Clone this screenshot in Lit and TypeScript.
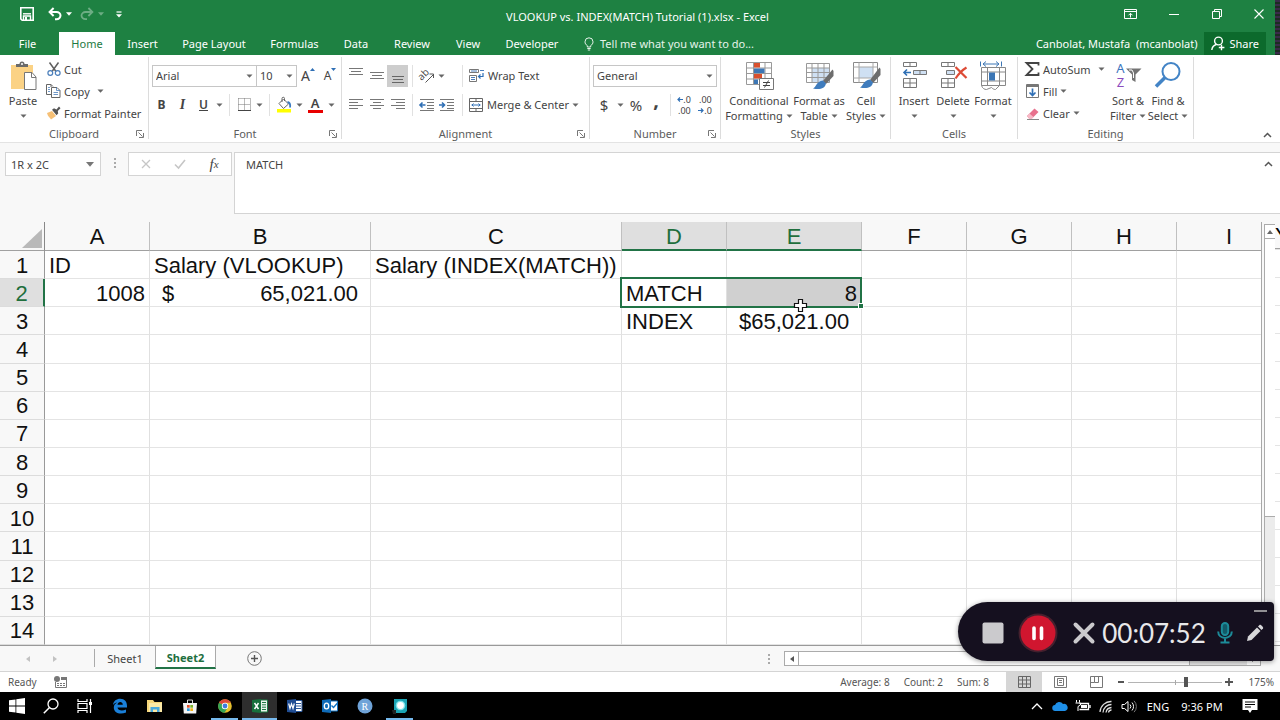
import { LitElement, html, svg, css, TemplateResult } from "lit";
import { customElement, property } from "lit/decorators.js";
import { classMap } from "lit/directives/class-map.js";

const caret = html`<svg class="caret" width="7" height="4" viewBox="0 0 7 4"><path d="M0.5 0.5h6L3.5 3.8z" fill="#666"/></svg>`;
const icon = (w: number, h: number, body: unknown) =>
  html`<svg width=${w} height=${h} viewBox="0 0 ${w} ${h}" fill="none" overflow="visible" aria-hidden="true">${body}</svg>`;

const I = {
  save: icon(14, 14, svg`<path d="M.8 .8h12.4v12.4H2.2L.8 11.8z" stroke="#fff" stroke-width="1.6"/><path d="M3 6.8h8" stroke="#fff" stroke-width="1.4"/><path d="M3.5 13V9h7v4" stroke="#fff" stroke-width="1.4"/><path d="M5 10h2v3H5z" fill="#fff"/>`),
  undo: icon(14, 14, svg`<path d="M2 5h6.5a4 3.6 0 0 1 0 7.2H7" stroke="#fff" stroke-width="2"/><path d="M5.6 1L1.6 5l4 4" stroke="#fff" stroke-width="2"/>`),
  redo: icon(14, 14, svg`<g opacity=".35"><path d="M12 5H5.500a4 3.600 0 0 0 0 7.200H7" stroke="#fff" stroke-width="1.800"/><path d="M8.400 1l4 4-4 4" stroke="#fff" stroke-width="1.800"/></g>`),
  caretW: icon(6, 4, svg`<path d="M0 .3h6L3 3.700z" fill="#fff"/>`),
  caretDim: icon(6, 4, svg`<path d="M0 .3h6L3 3.700z" fill="#fff" opacity=".35"/>`),
  custom: icon(6, 7, svg`<path d="M.5 1h5" stroke="#fff" stroke-width="1.200"/><path d="M0 3.200h6L3 6.500z" fill="#fff"/>`),
  ribbonOpt: icon(13, 10, svg`<path d="M.5 .5h12v9H.5zM.5 2.500h12" stroke="#fff"/><path d="M6.500 8.500V4.500M4.500 6.300l2-2 2 2" stroke="#fff"/>`),
  min: icon(10, 10, svg`<path d="M0 5.500h10" stroke="#fff"/>`),
  restore: icon(10, 10, svg`<path d="M.5 2.500h7v7h-7zM2.500 2.500v-2h7v7h-2" stroke="#fff"/>`),
  close: icon(10, 10, svg`<path d="M.5 .5l9 9M9.500 .5l-9 9" stroke="#fff" stroke-width="1.100"/>`),
  bulb: icon(10, 14, svg`<path d="M3.300 10V8.600C1.700 7.600 1 6.400 1 4.800a4 4 0 0 1 8 0c0 1.600-.7 2.800-2.300 3.800V10zM3.300 11.500h3.400M3.800 13h2.400" stroke="#e6f3ea"/>`),
  person: icon(14, 15, svg`<circle cx="7.500" cy="5" r="3.900" stroke="#fff" stroke-width="1.400"/><path d="M.8 14c.3-3 2-4.700 4.400-5.500M10.500 8.800v5.400M7.800 11.500h5.600" stroke="#fff" stroke-width="1.400"/>`),
  paste: icon(28, 30, svg`<path d="M2 4h22v24H2z" fill="#fbd285"/><path d="M7 6V3h3.500a2.500 2.500 0 0 1 5 0H19v3z" fill="#6b6b6b"/><circle cx="13" cy="3" r="1" fill="#fff"/><path d="M15.500 11.500h7.500l4 4.500v12.500H15.500z" fill="#fff" stroke="#777"/><path d="M22.500 11.500v5H27" stroke="#777"/>`),
  cut: icon(14, 14, svg`<path d="M2.500 .5l6.300 8.800M11.500 .5L5.200 9.300" stroke="#5f5f5f" stroke-width="1.500"/><circle cx="3.300" cy="11" r="2.400" stroke="#4a7ebb" stroke-width="1.200"/><circle cx="10.700" cy="11" r="2.400" stroke="#4a7ebb" stroke-width="1.200"/>`),
  copy: icon(15, 14, svg`<path d="M5.500 10.500h-5V.5h4.500l2 2M5 .5v2.500" stroke="#666"/><path d="M5.500 3.500h5.500l3 3v7H5.500z" fill="#fff" stroke="#666"/><path d="M10.500 3.500v3H14M7.500 8.500h4.500M7.500 10.500h4.500M2 3.500h2M2 5.500h2M2 7.500h2" stroke="#4a7ebb" stroke-width=".8"/>`),
  painter: icon(15, 14, svg`<path d="M1 7l5-2 4 5-5 3.500C4 11.500 2 11 1 7z" fill="#f6c076"/><path d="M6 3.800l2-1.500 2.500 1.200L13 .6l1.500 1.600-2.700 2.800.4 2.600-1.700 1.600z" fill="#555"/>`),
  border: icon(13, 13, svg`<path d="M.5 .5h12M.5 .5v12M12.500 .5v12M6.500 .5v12M.5 6.500h12" stroke="#777" stroke-dasharray="1 1"/><path d="M0 12.500h13" stroke="#444"/>`),
  fill: icon(16, 16, svg`<path d="M3 6.500L7.500 2l5 5L7.500 11.500z" fill="#fff" stroke="#666"/><path d="M6 5V1.500a1.200 1.200 0 0 1 2.500 0V4" stroke="#666"/><path d="M11.500 5c2.500.5 3 2.500 2.600 5.500" stroke="#3b7ac0" stroke-width="1.800"/><path d="M1 12h14v3.500H1z" fill="#ff0"/>`),
  top: icon(14, 12, svg`<path d="M0 -1.500h14M2 1.500h10M0 4.500h14" stroke="#777"/>`),
  mid: icon(14, 12, svg`<path d="M0 2.500h14M2 5.500h10M0 8.500h14" stroke="#777"/>`),
  bot: icon(14, 12, svg`<path d="M1 6.500h12M2 9.500h10M1 12.500h12" stroke="#666"/>`),
  left: icon(14, 12, svg`<path d="M0 .5h14M0 3.500h9M0 6.500h14M0 9.500h9" stroke="#777"/>`),
  center: icon(14, 12, svg`<path d="M0 .5h14M3 3.500h8M0 6.500h14M3 9.500h8" stroke="#777"/>`),
  right: icon(14, 12, svg`<path d="M0 .5h14M5 3.500h9M0 6.500h14M5 9.500h9" stroke="#777"/>`),
  orient: icon(16, 16, svg`<g transform="rotate(-45 6 8)"><text x="0" y="9" font-size="10" font-family="Open Sans, sans-serif" fill="#444">ab</text></g><path d="M6.500 14.500l8-8M14.500 10V6H10.500" stroke="#555"/>`),
  outdent: icon(16, 12, svg`<path d="M1 .5h14M8 3.500h7M8 6.500h7M8 9.500h7M1 11.500h14" stroke="#777"/><path d="M6.500 6H1M3.500 3.500L1 6l2.500 2.500" stroke="#2f6fb5" stroke-width="1.600"/>`),
  indent: icon(16, 12, svg`<path d="M1 .5h14M8 3.500h7M8 6.500h7M8 9.500h7M1 11.500h14" stroke="#777"/><path d="M0 6h5.500M3 3.500L5.500 6 3 8.500" stroke="#2f6fb5" stroke-width="1.600"/>`),
  wrap: icon(15, 15, svg`<path d="M.5 1.500h9v3h-9zM.5 7.500h7v6h-7z" stroke="#777"/><path d="M2 3h6M2 9.500h4M2 11.500h4M11 2.500h4" stroke="#4a7ebb"/><path d="M14 5v3.500H9.500M11.500 6.500l-2 2 2 2" stroke="#2f6fb5" stroke-width="1.200"/>`),
  merge: icon(14, 14, svg`<path d="M.5 .5h13v13H.5zM.5 3.500h13M.5 10.500h13M7 .5v3M7 10.500v3" stroke="#666"/><path d="M2.500 7h9M4.500 5.500L3 7l1.500 1.500M9.500 5.500L11 7 9.500 8.500" stroke="#2f6fb5"/>`),
  cond: icon(29, 29, svg`<path d="M1.500 1.500h25v22h-25zM1.500 7h25M1.500 12.500h25M1.500 18h25M8.500 1.500v22M20 1.500v22" stroke="#999"/><path d="M9 2h6v4.500H9zM9 13h8v4.500H9z" fill="#d9502e"/><path d="M9 7.500h10.500V12H9zM9 18.500h4V23H9z" fill="#3c76b5"/><path d="M14.500 17.500h14v11h-14z" fill="#fff" stroke="#777"/><path d="M18 21.500h7M18 24.500h7M23.500 19.500l-4 7" stroke="#444"/>`),
  table: icon(29, 29, svg`<path d="M1.500 2.500h23v19h-23z" fill="#fff"/><path d="M7 7h17.500v14.500H7z" fill="#cfe0f3"/><path d="M1.500 2.500h23v19h-23zM1.500 7h23M1.500 11.500h23M1.500 16.500h23M7 2.500v19M13 2.500v19M19 2.500v19" stroke="#999"/><path d="M27.500 8.500l1 1.500v5L21 23l-3-3z" fill="#6d6d6d"/><path d="M18 19.500l3 3c-1 5-6 6.500-13 5 3.500-1.500 3-7 10-8z" fill="#3f7cbd"/>`),
  styles: icon(29, 29, svg`<path d="M1.500 1.500h24v20h-24z" fill="#fff" stroke="#8a8a8a"/><path d="M7 6h14v11H7z" fill="#cfe0f3"/><path d="M1.500 6h24M1.500 17h24M7 1.500v20M21 1.500v20" stroke="#a8a8a8"/><path d="M27.500 6.500l1 1.500v6L21 22l-3-3z" fill="#6d6d6d"/><path d="M18 18.500l3 3c-1 5-6 6.500-13 5 3.500-1.500 3-7 10-8z" fill="#3f7cbd"/>`),
  insert: icon(27, 28, svg`<path d="M2.500 1.500h13v4h-13zM9 1.500v4M2.500 17.500h13v9h-13zM9 17.500v9M2.500 22h13" stroke="#777"/><path d="M12.500 9.500h13v4h-13z" fill="#cfe0f3" stroke="#777"/><path d="M19 9.500v4" stroke="#777"/><path d="M10 11.500H3M6 8.500l-3 3 3 3" stroke="#2f6fb5" stroke-width="1.600"/>`),
  del: icon(29, 28, svg`<path d="M2.500 1.500h13v4h-13zM9 1.500v4M2.500 17.500h13v9h-13zM9 17.500v9M2.500 22h13" stroke="#777"/><path d="M7.500 9.500h8v4h-8z" fill="#cfe0f3" stroke="#777"/><path d="M16.500 6l11 11M27.500 6.500c-5 3-8 6.500-11 11" stroke="#dd4b36" stroke-width="2.200"/>`),
  format: icon(28, 29, svg`<path d="M2.500 6.500h24v18h-24zM2.500 11h24M2.500 20h24M8.500 6.500v18M20.500 6.500v18" stroke="#888"/><path d="M10 11.500h6v8h-6z" fill="#3c76b5"/><path d="M1.500 .5v5M22.500 .5v5M4 3h16M7 .5L4 3l3 2.500M17 .5L20 3l-3 2.500" stroke="#3c76b5"/><path d="M2.500 24.500h18l-4 4c-2 0-3-1-4-2l-5 2c-2 0-4-1-5-4z" fill="#fff" stroke="#888"/>`),
  sigma: icon(15, 14, svg`<path d="M13.500 3.500V1H1.500l6 6-6 6h12v-2.500" stroke="#444" stroke-width="1.800"/>`),
  filldown: icon(13, 14, svg`<path d="M.5 .5h12v13H.5z" fill="#fff" stroke="#777"/><path d="M.5 1h12v2H.5z" fill="#777"/><path d="M6.500 4.500v7M3.500 8.500l3 3 3-3" stroke="#2f6fb5" stroke-width="1.700"/>`),
  eraser: icon(14, 13, svg`<path d="M1 9l7.500-7.500 4 3.500L6 11.500H3z" fill="#e8718d"/><path d="M1 9l2.500-2.500L7.500 10 6 11.500H3z" fill="#f7b9c6"/><path d="M1 12.500h12" stroke="#888"/>`),
  funnel: icon(16, 28, svg`<path d="M0 7.500h15.500l-6 6V21L6 19v-5.500z" fill="#737373"/><path d="M3 9h3l1.500 3v5" stroke="#fff"/>`),
  find: icon(28, 28, svg`<circle cx="17" cy="10.500" r="8.500" stroke="#4384c6" stroke-width="2"/><path d="M11 16.500L2 25.500" stroke="#4384c6" stroke-width="3.600"/>`),
  launch: icon(8, 8, svg`<path d="M.5 6V.5H6M2.500 2.500l4 4M7.500 3v4.500H3" stroke="#777"/>`),
  up: icon(9, 6, svg`<path d="M1 5l3.500-3.500L8 5" stroke="#555" stroke-width="1.500"/>`),
  arrL: icon(6, 5, svg`<path d="M6 2.500H1M3 .5l-2 2 2 2" stroke="#2f6fb5" stroke-width="1.200"/>`),
  arrR: icon(6, 5, svg`<path d="M0 2.500h5M3 .5l2 2-2 2" stroke="#2f6fb5" stroke-width="1.200"/>`),
};

const columns = [
  { id: "A", sel: false }, { id: "B", sel: false }, { id: "C", sel: false },
  { id: "D", sel: true }, { id: "E", sel: true }, { id: "F", sel: false },
  { id: "G", sel: false }, { id: "H", sel: false }, { id: "I", sel: false },
];

const money = (v: string) => html`<span class="money"><span>$</span><span>${v}</span></span>`;

const cells: Record<string, string | TemplateResult> = {
  A1: "ID", B1: "Salary (VLOOKUP)", C1: "Salary (INDEX(MATCH))",
  A2: "1008", B2: money("65,021.00"), D2: "MATCH", E2: "8",
  D3: "INDEX", E3: money("65,021.00"),
};

@customElement("title-bar")
class TitleBar extends LitElement {
  static styles = css`
    :host { display: block; background: #1e8142; color: #fff; font-size: 11px; }
    button { background: none; border: 0; padding: 0; margin: 0; color: inherit; font: inherit; display: flex; align-items: center; justify-content: center; white-space: nowrap; }
    .top { display: grid; grid-template-columns: 1fr auto 1fr; height: 32px; align-items: center; }
    .quick { display: flex; align-items: center; padding-left: 20px; padding-bottom: 4px; }
    .save { width: 14px; margin-right: 14px; }
    .arrow { width: 14px; }
    .undo { width: 14px; }
    .redo { width: 14px; margin-left: 4px; }
    .custom { width: 22px; }
    .win { display: flex; justify-content: flex-end; padding-bottom: 4px; }
    .win button { width: 43px; height: 26px; }
    .win button:last-child { width: 32px; margin-left: 5px; }
    .tabs { display: grid; grid-template-columns: 59px 56px 55px 88px 73px 50px 62px 50px 78px auto 1fr auto auto; height: 23px; align-items: stretch; }
    .tabs .file { padding: 0 4px 0 0; }
    .tabs .on { background: #fff; color: #1e7a42; }
    .tabs .tell { color: #e6f3ea; gap: 6px; padding-left: 13px; }
    .user { display: flex; align-items: center; padding-right: 7px; }
    .tabs .share { background: #0c6a2c; padding: 0 7px; gap: 4px; margin-right: 9px; }
  `;
  render() {
    return html`
      <div class="top">
        <div class="quick">
          <button class="save" aria-label="Save">${I.save}</button>
          <button class="undo" aria-label="Undo">${I.undo}</button>
          <button class="arrow" aria-label="Undo history">${I.caretW}</button>
          <button class="redo" aria-label="Redo">${I.redo}</button>
          <button class="arrow" aria-label="Redo history">${I.caretDim}</button>
          <button class="custom" aria-label="Customize">${I.custom}</button>
        </div>
        <div>VLOOKUP vs. INDEX(MATCH) Tutorial (1).xlsx - Excel</div>
        <div class="win">
          <button aria-label="Ribbon options">${I.ribbonOpt}</button>
          <button aria-label="Minimize">${I.min}</button>
          <button aria-label="Restore">${I.restore}</button>
          <button aria-label="Close">${I.close}</button>
        </div>
      </div>
      <nav class="tabs">
        <button class="file">File</button>
        <button class="on">Home</button>
        ${["Insert", "Page Layout", "Formulas", "Data", "Review", "View", "Developer"].map((t) => html`<button>${t}</button>`)}
        <button class="tell">${I.bulb}Tell me what you want to do...</button>
        <span></span>
        <span class="user">Canbolat, Mustafa&nbsp; (mcanbolat)</span>
        <button class="share">${I.person}Share</button>
      </nav>`;
  }
}

@customElement("ribbon-group")
class RibbonGroup extends LitElement {
  @property() label = "";
  @property({ type: Boolean }) launcher = false;
  static styles = css`
    :host { display: flex; flex-direction: column; flex: none; box-sizing: border-box; border-right: 1px solid #dcdcdc; margin: 2px 0 3px; }
    .body { flex: 1; min-height: 0; }
    .foot { display: grid; grid-template-columns: 16px 1fr 16px; align-items: center; height: 11px; line-height: 11px; text-align: center; color: #5c5c5c; }
    .foot span { grid-column: 2; }
    button { border: 0; background: none; padding: 0; display: flex; justify-content: center; }
  `;
  render() {
    return html`<div class="body"><slot></slot></div>
      <div class="foot"><span>${this.label}</span>
        ${this.launcher ? html`<button aria-label="${this.label} settings">${I.launch}</button>` : ""}</div>`;
  }
}

@customElement("excel-ribbon")
class ExcelRibbon extends LitElement {
  static styles = css`
    :host { display: flex; height: 88px; box-sizing: border-box; background: #fff; border-bottom: 1px solid #e3e3e3; font-size: 11px; color: #444; }
    button { background: none; border: 0; padding: 0; margin: 0; color: inherit; font: inherit; display: flex; align-items: center; justify-content: center; white-space: nowrap; }
    .clip { width: 149px; } .font { width: 193px; } .align { width: 248px; } .num { width: 131px; }
    .styles { width: 170px; } .cells { width: 127px; } .edit { width: 176px; }
    .cols { display: flex; }
    .cols.pad { padding-left: 3px; }
    .cols.edits { padding-left: 7px; }
    .small { display: flex; flex-direction: column; padding-top: 1px; }
    .small button { height: 22px; justify-content: flex-start; gap: 3px; }
    .small .ic { width: 15px; display: flex; justify-content: center; }
    .small.e { width: 83px; }
    .far { margin-left: 4px; display: flex; }
    .big { flex-direction: column; justify-content: flex-start; padding-top: 4px; line-height: 15px; }
    .big svg { flex: none; }
    .big .pic { height: 32px; display: flex; align-items: flex-start; justify-content: center; }
    .big .two { height: 15px; display: flex; align-items: center; gap: 3px; }
    .az { display: flex; gap: 1px; padding-left: 2px; }
    .az .letters { display: flex; flex-direction: column; font-size: 13px; line-height: 14px; color: #3c76c0; }
    .az .letters b { font-weight: 400; color: #8a4bbd; }
    .w46 { width: 46px; } .w70 { width: 70px; } .w50 { width: 50px; } .w44 { width: 44px; }
    .w40 { width: 40px; } .w38 { width: 38px; } .w42 { width: 42px; }
    .rows { padding-top: 4px; }
    .row { display: grid; height: 29px; align-items: center; }
    .f1 { padding-left: 3px; grid-template-columns: 105px 40px 22px 22px; }
    .f2 { padding-left: 2px; grid-template-columns: 21px 21px 21px 10px 10px 20px 10px 10px 20px 10px 22px 10px; }
    .a1 { padding-left: 4px; grid-template-columns: 20px 21px 21px 9px 19px 21px 10px 100px; }
    .a2 { padding-left: 4px; grid-template-columns: 20px 21px 21px 9px 19px 21px 10px 100px 16px; }
    .n1 { padding-left: 3px; grid-template-columns: 124px; }
    .n2 { padding-left: 3px; grid-template-columns: 22px 10px 22px 18px 10px 21px 21px; }
    .row button { height: 22px; }
    .row .on { background: #cdcdcd; }
    .row .wide { justify-content: flex-start; gap: 4px; padding-left: 2px; }
    .sep { justify-self: center; width: 1px; height: 22px; background: #e1e1e1; }
    .combo { display: grid; border: 1px solid #c6c6c6; height: 20px; align-items: center; }
    .combo + .combo { border-left: 0; }
    .combo select { grid-area: 1 / 1; appearance: none; border: 0; background: none; font: inherit; color: #444; padding: 0 0 0 3px; width: 100%; min-width: 0; }
    .combo .caret { grid-area: 1 / 1; justify-self: end; margin-right: 3px; pointer-events: none; }
    .b { font-weight: 700; font-size: 12px; } .i { font-style: italic; font-family: "Liberation Serif", serif; font-weight: 700; font-size: 14px; }
    .u { text-decoration: underline; font-weight: 600; font-size: 12px; }
    .grow { font-size: 14px; } .shrink { font-size: 12px; }
    .sup { align-self: flex-start; margin-top: 3px; }
    .ink { flex-direction: column; font-size: 13px; line-height: 13px; font-weight: 600; }
    .ink i { width: 15px; height: 3px; background: #e80000; }
    .sym { font-size: 15px; }
    .comma { font-size: 20px; font-weight: 700; line-height: 10px; padding-bottom: 10px; }
    .dec { display: grid; font-size: 9px; line-height: 11px; justify-items: end; align-content: center; padding-right: 3px; }
    .dec span { display: flex; align-items: center; height: 11px; }
    .end { flex: 1; display: flex; align-items: flex-end; justify-content: flex-end; padding: 0 8px 4px 0; }
  `;
  big(w: string, pic: unknown, a: string, b?: string) {
    return html`<button class="big ${w}"><span class="pic">${pic}</span><span>${a}</span><span class="two">${b ?? ""}${caret}</span></button>`;
  }
  render() {
    const sep = html`<span class="sep"></span>`;
    const drop = (n: string) => html`<button aria-label="${n} options">${caret}</button>`;
    const az = html`<span class="az"><span class="letters"><span>A</span><b>Z</b></span>${I.funnel}</span>`;
    return html`
      <ribbon-group class="clip" label="Clipboard" launcher>
        <div class="cols">
          ${this.big("w46", I.paste, "Paste")}
          <div class="small">
            <button><span class="ic">${I.cut}</span>Cut</button>
            <button><span class="ic">${I.copy}</span>Copy<span class="far">${caret}</span></button>
            <button><span class="ic">${I.painter}</span>Format Painter</button>
          </div>
        </div>
      </ribbon-group>
      <ribbon-group class="font" label="Font" launcher>
        <div class="rows">
          <div class="row f1">
            <span class="combo"><select aria-label="Font name"><option>Arial</option></select>${caret}</span>
            <span class="combo"><select aria-label="Font size"><option>10</option></select>${caret}</span>
            <button class="grow" aria-label="Increase font size">A<svg class="sup" width="5" height="3" viewBox="0 0 5 3"><path d="M0 3h5L2.500 0z" fill="#2f6fb5"/></svg></button>
            <button class="shrink" aria-label="Decrease font size">A<svg class="sup" width="5" height="3" viewBox="0 0 5 3"><path d="M0 0h5L2.500 3z" fill="#2f6fb5"/></svg></button>
          </div>
          <div class="row f2">
            <button class="b">B</button><button class="i">I</button><button class="u">U</button>${drop("Underline")}${sep}
            <button aria-label="Borders">${I.border}</button>${drop("Borders")}${sep}
            <button aria-label="Fill colour">${I.fill}</button>${drop("Fill")}
            <button class="ink">A<i></i></button>${drop("Font colour")}
          </div>
        </div>
      </ribbon-group>
      <ribbon-group class="align" label="Alignment" launcher>
        <div class="rows">
          <div class="row a1">
            <button aria-label="Top align">${I.top}</button><button aria-label="Middle align">${I.mid}</button><button class="on" aria-label="Bottom align">${I.bot}</button>${sep}
            <button aria-label="Orientation">${I.orient}</button>
            <button class="wide" aria-label="Orientation options">${caret}</button>${sep}
            <button class="wide">${I.wrap}Wrap Text</button>
          </div>
          <div class="row a2">
            <button aria-label="Align left">${I.left}</button><button aria-label="Center">${I.center}</button><button aria-label="Align right">${I.right}</button>${sep}
            <button aria-label="Decrease indent">${I.outdent}</button><button aria-label="Increase indent">${I.indent}</button>${sep}
            <button class="wide">${I.merge}Merge &amp; Center</button>${drop("Merge")}
          </div>
        </div>
      </ribbon-group>
      <ribbon-group class="num" label="Number" launcher>
        <div class="rows">
          <div class="row n1"><span class="combo"><select aria-label="Number format"><option>General</option></select>${caret}</span></div>
          <div class="row n2">
            <button class="sym">$</button>${drop("Currency")}<button class="sym">%</button><button class="comma">,</button>${sep}
            <button class="dec"><span>${I.arrL}.0</span><span>.00</span></button>
            <button class="dec"><span>.00</span><span>${I.arrR}.0</span></button>
          </div>
        </div>
      </ribbon-group>
      <ribbon-group class="styles" label="Styles">
        <div class="cols pad">${this.big("w70", I.cond, "Conditional", "Formatting")}${this.big("w50", I.table, "Format as", "Table")}${this.big("w44", I.styles, "Cell", "Styles")}</div>
      </ribbon-group>
      <ribbon-group class="cells" label="Cells">
        <div class="cols pad">${this.big("w40", I.insert, "Insert")}${this.big("w38", I.del, "Delete")}${this.big("w42", I.format, "Format")}</div>
      </ribbon-group>
      <ribbon-group class="edit" label="Editing">
        <div class="cols edits">
          <div class="small e">
            <button><span class="ic">${I.sigma}</span>AutoSum<span class="far">${caret}</span></button>
            <button><span class="ic">${I.filldown}</span>Fill${caret}</button>
            <button><span class="ic">${I.eraser}</span>Clear${caret}</button>
          </div>
          ${this.big("w40", az, "Sort &", "Filter")}${this.big("w40", I.find, "Find &", "Select")}
        </div>
      </ribbon-group>
      <div class="end"><button aria-label="Collapse ribbon">${I.up}</button></div>`;
  }
}

@customElement("formula-bar")
class FormulaBar extends LitElement {
  static styles = css`
    :host { display: flex; align-items: flex-start; height: 62px; padding: 9px 0 8px 5px; background: #f8f8f8; font-size: 11px; color: #444; }
    .name { display: grid; width: 94px; height: 22px; border: 1px solid #d4d4d4; background: #fff; align-items: center; }
    .name input { grid-area: 1 / 1; border: 0; background: none; font: inherit; color: inherit; padding: 0 0 0 5px; min-width: 0; }
    .name .caret { grid-area: 1 / 1; justify-self: end; margin-right: 6px; }
    .dots { width: 27px; height: 24px; display: flex; justify-content: center; align-items: center; }
    .tools { display: flex; border: 1px solid #d4d4d4; background: #fff; height: 22px; width: 102px; margin-right: 2px; }
    .tools button { flex: 1; background: none; border: 0; padding: 0; display: flex; align-items: center; justify-content: center; font: italic 11px "Liberation Serif", serif; color: #444; }
    .tools b { font-size: 15px; font-weight: 400; }
    .entry { flex: 1; display: flex; border: 1px solid #d4d4d4; border-right: 0; background: #fff; height: 60px; }
    textarea { flex: 1; border: 0; resize: none; background: none; font: inherit; line-height: 15px; color: inherit; padding: 4px 11px; }
    .entry button { border: 0; background: none; padding: 8px 7px 0 0; display: flex; align-items: flex-start; }
  `;
  render() {
    return html`
      <div class="name"><input aria-label="Name box" .value=${"1R x 2C"} />
        <svg class="caret" width="8" height="5" viewBox="0 0 8 5"><path d="M0 0h8L4 4.800z" fill="#777"/></svg></div>
      <div class="dots">${icon(2, 12, svg`<path d="M1 0v12" stroke="#aaa" stroke-width="2" stroke-dasharray="2 2"/>`)}</div>
      <div class="tools">
        <button aria-label="Cancel">${icon(10, 10, svg`<path d="M1 1l8 8M9 1L1 9" stroke="#c6c6c6" stroke-width="1.300"/>`)}</button>
        <button aria-label="Enter">${icon(12, 10, svg`<path d="M1 5.500L4.500 9 11 1" stroke="#c6c6c6" stroke-width="1.600"/>`)}</button>
        <button aria-label="Insert function"><b>f</b>x</button>
      </div>
      <div class="entry"><textarea aria-label="Formula" .value=${"MATCH"}></textarea><button aria-label="Collapse formula bar">${I.up}</button></div>`;
  }
}

@customElement("work-sheet")
class WorkSheet extends LitElement {
  static styles = css`
    :host { flex: 1; min-height: 0; display: flex; background: #f8f8f8; position: relative; }
    .view { flex: 1; min-width: 0; overflow: hidden; border-right: 1px solid #a8a8a8; }
    table { height: 100%; width: 1282px; table-layout: fixed; border-spacing: 0; font: 22px/24px "Liberation Sans", Arial, sans-serif; color: #111; }
    th { font-weight: 400; padding: 2px 0 0; background: #f8f8f8; }
    thead th { height: 24px; border-bottom: 1px solid #a0a0a0; border-right: 1px solid #c0c0c0; }
    thead .sel { background: #dfdfdf; color: #1f6f3d; border-bottom: 2px solid #217346; height: 22px; padding-top: 3px; }
    thead .corner { border-right-color: #888; }
    .corner svg { display: block; margin: 2px 0 0 22px; }
    tbody th { border-right: 1px solid #999; border-bottom: 1px solid #dcdcdc; text-align: center; }
    tbody .sel { background: #dfdfdf; color: #1f6f3d; border-right: 2px solid #217346; }
    td { background: #fff; border-right: 1px solid #e0e0e0; border-bottom: 1px solid #e4e4e4; padding: 2px 4px 0; white-space: nowrap; position: relative; }
    .r { text-align: right; }
    .money { display: flex; justify-content: space-between; padding: 0 8px; }
    .D2::after, .E2::after { content: ""; position: absolute; z-index: 1; inset: -2px -1px -2px -2px; border: solid #217346; border-width: 2px 0 2px 2px; }
    .E2::after { inset: -2px -1px -2px 0; border-width: 2px 2px 2px 0; }
    .E2 { background: #d0d0d0; }
    .E2::before { content: ""; position: absolute; z-index: 2; right: -3px; bottom: -3px; width: 4px; height: 4px; background: #217346; border: 1px solid #fff; }
    .c0 { width: 45px; } .cA, .cD, .cF, .cG, .cH, .cI { width: 105px; } .cB { width: 221px; } .cC { width: 251px; } .cE { width: 135px; }
    .pointer { position: absolute; left: 793px; top: 76px; z-index: 3; }
    .bar { width: 10px; margin: 2px 0 0 2px; border: 1px solid #ababab; border-right: 0; border-bottom: 0; background: #ececec; display: flex; flex-direction: column; }
    .bar button { height: 14px; border: 0; border-bottom: 1px solid #ababab; background: #fff; padding: 0; display: flex; align-items: center; justify-content: center; }
    .thumb { height: 66%; background: #fff; border-bottom: 1px solid #ababab; }
    .peek { width: 5px; overflow: hidden; background: repeating-linear-gradient(#fff 0 27px, #e4e4e4 27px 28px); font: 22px/28px "Liberation Sans", Arial, sans-serif; }
    .peek span { display: block; background: #f8f8f8; height: 26px; border-bottom: 1px solid #a0a0a0; }
  `;
  render() {
    const rows = Array.from({ length: 14 }, (_, i) => i + 1);
    return html`
      <div class="view">
        <table>
          <colgroup><col class="c0" />${columns.map((c) => html`<col class="c${c.id}" />`)}</colgroup>
          <thead><tr><th class="corner"><svg width="20" height="19" viewBox="0 0 20 19"><path d="M20 0v19H0z" fill="#b9b9b9"/></svg></th>
            ${columns.map((c) => html`<th scope="col" class=${classMap({ sel: c.sel })}>${c.id}</th>`)}</tr></thead>
          <tbody>${rows.map((n) => html`<tr><th scope="row" class=${classMap({ sel: n === 2 })}>${n}</th>
            ${columns.map((c) => { const k = c.id + n; return html`<td class="${k} ${k === "A2" || k === "E2" ? "r" : ""}">${cells[k] ?? ""}</td>`; })}</tr>`)}
          </tbody>
        </table>
      </div>
      <div class="bar"><button aria-label="Scroll up">${icon(6, 4, svg`<path d="M0 4h6L3 0z" fill="#666"/>`)}</button><div class="thumb"></div></div>
      <div class="peek"><span>Y</span></div>
      <svg class="pointer" width="16" height="16" viewBox="0 0 16 16"><path d="M5.500 1.500h4v4h4v4h-4v4h-4v-4h-4v-4h4z" fill="#fff" stroke="#111" stroke-width="1.200"/></svg>`;
  }
}

@customElement("sheet-tabs")
class SheetTabs extends LitElement {
  static styles = css`
    :host { display: flex; height: 25px; border-top: 1px solid #999; border-bottom: 1px solid #d4d4d4; background: #f8f8f8; font-size: 11px; color: #444; flex: none; }
    button { background: none; border: 0; padding: 0; font: inherit; color: inherit; display: flex; align-items: center; justify-content: center; }
    .nav { display: flex; width: 94px; padding-left: 14px; box-sizing: border-box; }
    .nav button { width: 27px; }
    .tab { width: 61px; }
    .first { border-left: 1px solid #aaa; margin: 3px 0 4px; line-height: 15px; }
    .on { background: #fff; color: #1e6f3e; font-weight: 700; border: 1px solid #aaa; border-top: 0; border-bottom: 2px solid #217346; height: 23px; padding-top: 2px; box-sizing: border-box; }
    .add { width: 76px; }
    .spacer { flex: 1; }
    .dots { align-self: center; margin-right: 14px; display: flex; }
    .scroll { display: flex; width: 477px; height: 15px; margin: 5px 19px 0 0; border: 1px solid #ababab; box-sizing: border-box; background: #e4e4e4; }
    .scroll button { width: 13px; background: #fff; }
    .thumb { flex: 0 1 390px; background: #fff; border: solid #ababab; border-width: 0 1px; margin-right: auto; }
  `;
  render() {
    return html`
      <div class="nav"><button aria-label="Previous sheet">${icon(4, 6, svg`<path d="M4 0v6L0 3z" fill="#c2c2c2"/>`)}</button>
        <button aria-label="Next sheet">${icon(4, 6, svg`<path d="M0 0v6l4-3z" fill="#c2c2c2"/>`)}</button></div>
      <button class="tab first">Sheet1</button><button class="tab on">Sheet2</button>
      <button class="add" aria-label="New sheet">${icon(15, 15, svg`<circle cx="7.500" cy="7.500" r="6.800" stroke="#777"/><path d="M7.500 4v7M4 7.500h7" stroke="#555" stroke-width="1.400"/>`)}</button>
      <span class="spacer"></span>
      <span class="dots">${icon(2, 10, svg`<path d="M1 0v10" stroke="#aaa" stroke-width="2" stroke-dasharray="2 2"/>`)}</span>
      <div class="scroll"><button aria-label="Scroll left">${icon(4, 6, svg`<path d="M4 0v6L0 3z" fill="#555"/>`)}</button><div class="thumb"></div><button aria-label="Scroll right">${icon(4, 6, svg`<path d="M0 0v6l4-3z" fill="#555"/>`)}</button></div>`;
  }
}

@customElement("status-bar")
class StatusBar extends LitElement {
  static styles = css`
    :host { display: flex; height: 20px; background: #fff; align-items: stretch; font-size: 10px; color: #555; padding: 0 6px 0 8px; flex: none; }
    span, button { display: flex; align-items: center; }
    button { border: 0; background: none; padding: 0; width: 36px; justify-content: center; color: #555; font: inherit; }
    .ready { gap: 17px; flex: 1; }
    .stats { gap: 14px; padding-right: 17px; }
    .on { background: #d6d6d6; }
    .z { width: 14px; }
    input { appearance: none; width: 94px; margin: 0; background: linear-gradient(#aaa, #aaa) 50% 50% / 1px 5px no-repeat, linear-gradient(#b4b4b4, #b4b4b4) 0 50% / 100% 1px no-repeat; }
    input::-webkit-slider-thumb { appearance: none; width: 4px; height: 10px; background: #555; }
    .pct { width: 38px; justify-content: flex-end; }
  `;
  render() {
    return html`
      <span class="ready">Ready ${icon(13, 12, svg`<circle cx="3" cy="3" r="3" fill="#777"/><path d="M7 1h6v3H7z" fill="#777"/><path d="M1.500 6v5.500h11V4" stroke="#777"/><path d="M3 7.500h8M3 9.500h8" stroke="#777" stroke-dasharray="2 1"/>`)}</span>
      <span class="stats"><span>Average: 8</span><span>Count: 2</span><span>Sum: 8</span></span>
      <button class="on" aria-label="Normal view">${icon(13, 12, svg`<path d="M.5 .5h12v11H.5zM.5 4h12M.5 8h12M4.500 .5v11M8.500 .5v11" stroke="#666"/>`)}</button>
      <button aria-label="Page layout view">${icon(13, 12, svg`<path d="M.5 .5h12v11H.5zM3.500 2.500h6v7h-6zM5 4.500h3M5 6.500h3" stroke="#777"/>`)}</button>
      <button aria-label="Page break view">${icon(13, 12, svg`<path d="M.5 .5h12v11H.5zM4.500 .5v6h4v-6M.5 6.500h4" stroke="#777"/>`)}</button>
      <button class="z" aria-label="Zoom out">${icon(6, 2, svg`<path d="M0 1h6" stroke="#555" stroke-width="2"/>`)}</button>
      <input type="range" aria-label="Zoom" min="0" max="100" value="62" />
      <button class="z" aria-label="Zoom in">${icon(8, 8, svg`<path d="M0 4h8M4 0v8" stroke="#555" stroke-width="1.800"/>`)}</button>
      <span class="pct">175%</span>`;
  }
}

const apps: { n: string; s: string; g: TemplateResult }[] = [
  { n: "Start", s: "s", g: icon(16, 16, svg`<path d="M0 2.300l6.500-.9v6.200H0zM7.300 1.300L16 0v7.600H7.300zM0 8.400h6.500v6.200L0 13.700zM7.300 8.400H16V16l-8.700-1.200z" fill="#fff"/>`) },
  { n: "Search", s: "s", g: icon(16, 16, svg`<circle cx="10" cy="6" r="5" stroke="#fff" stroke-width="1.300"/><path d="M6.500 9.500L.8 15.200" stroke="#fff" stroke-width="1.500"/>`) },
  { n: "Task view", s: "s", g: icon(16, 16, svg`<path d="M1 1v2.500h9V1M1 15v-2.500h9V15M1 5.500h9v5H1zM13.500 1v14" stroke="#fff" stroke-width="1.200"/><path d="M12 4h3v3h-3z" fill="#fff"/>`) },
  { n: "Edge", s: "", g: icon(16, 16, svg`<path d="M1 7C1.500 3 4.500 .8 8.200 .8c4.500 0 6.800 3 6.800 7.200v1.500H5.500c.3 3 4.500 4 8.500 2v3C8 17 1.800 15 1.800 9.500c0-2.300 1.200-4 3.400-5C3.500 4.800 2 5.700 1 7zM5.500 6.800h5.300c-.1-3.800-5-3.500-5.300 0z" fill="#1a7fd8"/>`) },
  { n: "Explorer", s: "", g: icon(16, 14, svg`<path d="M0 1h6l1.500 2H15v10H0z" fill="#f5d67a"/><path d="M2 4h13v9H2z" fill="#fbe9a6"/><path d="M3.500 13V8h9v5h-2.500v-2.500H6V13z" fill="#49a9dd"/>`) },
  { n: "Store", s: "", g: icon(14, 15, svg`<path d="M4.500 4V1h5v3" stroke="#ddd"/><path d="M0 4h14l-.8 10.500H.8z" fill="#f4f4f4"/><path d="M4 6h2.700v2.700H4z" fill="#e4512b"/><path d="M7.300 6H10v2.700H7.300z" fill="#7cb42c"/><path d="M4 9.300h2.700V12H4z" fill="#2a9be0"/><path d="M7.300 9.300H10V12H7.300z" fill="#f3b21b"/>`) },
  { n: "Chrome", s: "run", g: icon(14, 14, svg`<circle cx="7" cy="7" r="6.800" fill="#e4bf2e"/><path d="M7 7L1 3.700A6.800 6.800 0 0 1 13 3.800H7z" fill="#dd4b3c"/><path d="M7 7L1 3.700A6.800 6.800 0 0 0 6.500 13.800L9.800 8.500z" fill="#33a456"/><circle cx="7" cy="7" r="3.200" fill="#fff"/><circle cx="7" cy="7" r="2.400" fill="#3e7de0"/>`) },
  { n: "Excel", s: "run act", g: icon(16, 14, svg`<path d="M8 1h7.500v12H8z" fill="#eaf5ee" stroke="#1c7a44"/><path d="M10 3.500h4M10 5.800h4M10 8.200h4M10 10.500h4" stroke="#1c7a44"/><path d="M0 1l9-1v14l-9-1z" fill="#17703c"/><path d="M2.500 4l4 6M6.500 4l-4 6" stroke="#fff" stroke-width="1.500"/>`) },
  { n: "Word", s: "", g: icon(16, 14, svg`<path d="M8 1.500h7v11H8z" fill="#fff" stroke="#2a5699"/><path d="M9 4.500h5M9 7h5M9 9.500h5" stroke="#2a5699"/><path d="M0 1l9-1v14l-9-1z" fill="#204d93"/><path d="M1.700 4.500l1.300 5 1.500-4.500L6 9.500l1.300-5" stroke="#fff" stroke-width="1.200"/>`) },
  { n: "Outlook", s: "", g: icon(16, 14, svg`<path d="M8 2h7.500v10H8z" fill="#fff" stroke="#1272c0"/><path d="M9.500 6.500l2 2 4-4.500" stroke="#1272c0" stroke-width="1.400"/><path d="M0 1l9-1v14l-9-1z" fill="#0f6bb8"/><ellipse cx="4.500" cy="7" rx="2.200" ry="2.900" stroke="#fff" stroke-width="1.400"/>`) },
  { n: "RStudio", s: "", g: icon(16, 16, svg`<circle cx="8" cy="8" r="7.500" fill="#6fa3d8"/><text x="4.500" y="11.500" font-size="10" font-family="Liberation Serif, serif" fill="#fff">R</text>`) },
  { n: "Recorder", s: "run", g: icon(16, 16, svg`<path d="M2 1h13v12l-2 2H2z" fill="#1ba4b4"/><path d="M0 12h4v4H1z" fill="#222"/><circle cx="8.500" cy="7.500" r="4.800" fill="#7fe3ea"/><circle cx="8.500" cy="7.500" r="3.400" fill="#fff"/>`) },
];

@customElement("task-bar")
class TaskBar extends LitElement {
  static styles = css`
    :host { display: flex; height: 28px; background: #000; color: #fff; font-size: 11px; flex: none; }
    button { background: none; border: 0; padding: 0; width: 35px; display: flex; align-items: center; justify-content: center; color: inherit; font: inherit; white-space: nowrap; }
    .s { width: 34px; }
    .run { border-bottom: 2px solid #76b9ed; padding-top: 2px; margin: 0 4px; width: 27px; }
    .run.act { background: #2e2e2e; margin: 0; width: 35px; }
    .spacer { flex: 1; }
    .i { width: 23px; }
    .lang { width: 36px; }
    .time { width: 52px; margin-right: 2px; }
    .note { width: 40px; margin-right: 10px; }
  `;
  render() {
    return html`
      ${apps.map((a) => html`<button class=${a.s} aria-label=${a.n}>${a.g}</button>`)}
      <span class="spacer"></span>
      <button class="i" aria-label="Hidden icons">${icon(12, 8, svg`<path d="M1 7l5-5 5 5" stroke="#fff" stroke-width="1.300"/>`)}</button>
      <button class="i" aria-label="Cloud">${icon(16, 10, svg`<path d="M3.500 10a3 3 0 0 1-.5-6A4.500 4.500 0 0 1 11 3a3.600 3.600 0 0 1 2 7z" fill="#1e8fe8"/>`)}</button>
      <button class="i" aria-label="Battery">${icon(16, 12, svg`<path d="M4.500 3.500h9v6h-9M15 5v3" stroke="#fff" stroke-width="1.300"/><path d="M6 5h6v3H6z" fill="#fff"/><path d="M1.500 0v2.500M4.500 0v2.500M.5 3h5v2l-2.500 1.500v4.500" stroke="#fff"/>`)}</button>
      <button class="i" aria-label="Network">${icon(14, 13, svg`<path d="M1 12A11 11 0 0 1 12.500 1.500M4 12.500A8.500 8.500 0 0 1 12.500 4.500M7 12.500a6 6 0 0 1 5.500-5M9.500 12.500a3 3 0 0 1 3-2.500" stroke="#ddd" stroke-width="1.300"/>`)}</button>
      <button class="i" aria-label="Volume">${icon(16, 13, svg`<path d="M1 4.500h2.500l3.500-3v10l-3.500-3H1z" stroke="#fff"/><path d="M9 4.500a3 3 0 0 1 0 4M11 2.500a6 6 0 0 1 0 8" stroke="#fff"/><path d="M13 .8a8 8 0 0 1 0 11.400" stroke="#777"/>`)}</button>
      <button class="lang">ENG</button>
      <button class="time">9:36 PM</button>
      <button class="note" aria-label="Notifications">${icon(16, 16, svg`<path d="M.5 1h15v11h-5.500l-2 3-2-3H.5z" fill="#fff"/><path d="M3 4h10M3 6.500h10M3 9h6" stroke="#000"/>`)}</button>`;
  }
}

@customElement("record-panel")
class RecordPanel extends LitElement {
  static styles = css`
    :host { position: absolute; right: 6px; bottom: 59px; width: 316px; height: 59px; box-sizing: border-box; border-radius: 30px 4px 4px 30px; background: #15101f; box-shadow: 0 1px 5px rgba(0, 0, 0, 0.4); display: flex; align-items: center; padding-left: 24px; padding-top: 2px; z-index: 5; }
    button { border: 0; background: none; padding: 0; display: flex; justify-content: center; align-items: center; }
    .stop { width: 22px; margin-right: 14px; }
    .pause { width: 40px; margin-right: 14px; }
    .cancel { width: 24px; }
    .clock { width: 116px; text-align: center; font: 400 26px/32px Lato, sans-serif; color: #e8e8ea; }
    .mic { width: 18px; margin-left: 4px; }
    .tools { display: flex; flex-direction: column; align-items: center; width: 36px; gap: 12px; padding: 0 0 14px 3px; }
    .line { align-self: flex-end; margin-right: 6px; }
  `;
  render() {
    return html`
      <button class="stop" aria-label="Stop">${icon(22, 22, svg`<rect x=".5" y=".5" width="21" height="21" rx="2" fill="#cbcacd"/>`)}</button>
      <button class="pause" aria-label="Pause">${icon(40, 40, svg`<circle cx="20" cy="20" r="19.500" fill="#45202e"/><circle cx="20" cy="20" r="17.500" fill="#d0162f"/><path d="M16 15v10.500M23.500 15v10.500" stroke="#fff" stroke-width="3.600" stroke-linecap="round"/>`)}</button>
      <button class="cancel" aria-label="Cancel">${icon(22, 22, svg`<path d="M2.500 2.500l17 17M19.500 2.500l-17 17" stroke="#cbcacd" stroke-width="4" stroke-linecap="round"/>`)}</button>
      <span class="clock">00:07:52</span>
      <button class="mic" aria-label="Microphone">${icon(16, 22, svg`<rect x="4.800" y="1" width="6.400" height="12" rx="3.200" fill="#125a68" stroke="#1c8b99" stroke-width="2"/><path d="M1.200 9.500c0 8.500 13.600 8.500 13.600 0M8 16v4M3.500 20.500h9" stroke="#1c8b99" stroke-width="2"/>`)}</button>
      <span class="tools"><button class="line" aria-label="Minimize">${icon(13, 2, svg`<path d="M0 1h13" stroke="#bbb" stroke-width="1.500"/>`)}</button>
        <button aria-label="Draw">${icon(18, 18, svg`<path d="M1 17l1-4.500L11 3.500 14.500 7l-9 9z" fill="#d8d8da"/><path d="M12 2.500l1.500-1.500c1-1 4.500 2.500 3.500 3.500L15.500 6z" fill="#d8d8da"/>`)}</button></span>`;
  }
}

@customElement("app-root")
class AppRoot extends LitElement {
  static styles = css`
    :host { display: flex; flex-direction: column; height: 100vh; position: relative; overflow: hidden; background: #fff; font-family: "Noto Sans", "Open Sans", sans-serif; }
    .head { display: flex; background: repeating-linear-gradient(#3a2a4a 0 2px, #1c2b22 2px 4px); }
    .head title-bar { flex: 1; margin-right: 5px; }
    formula-bar, excel-ribbon, .head { flex: none; }
  `;
  render() {
    return html`
      <div class="head"><title-bar></title-bar></div>
      <excel-ribbon></excel-ribbon>
      <formula-bar></formula-bar>
      <work-sheet></work-sheet>
      <sheet-tabs></sheet-tabs>
      <status-bar></status-bar>
      <task-bar></task-bar>
      <record-panel></record-panel>`;
  }
}
